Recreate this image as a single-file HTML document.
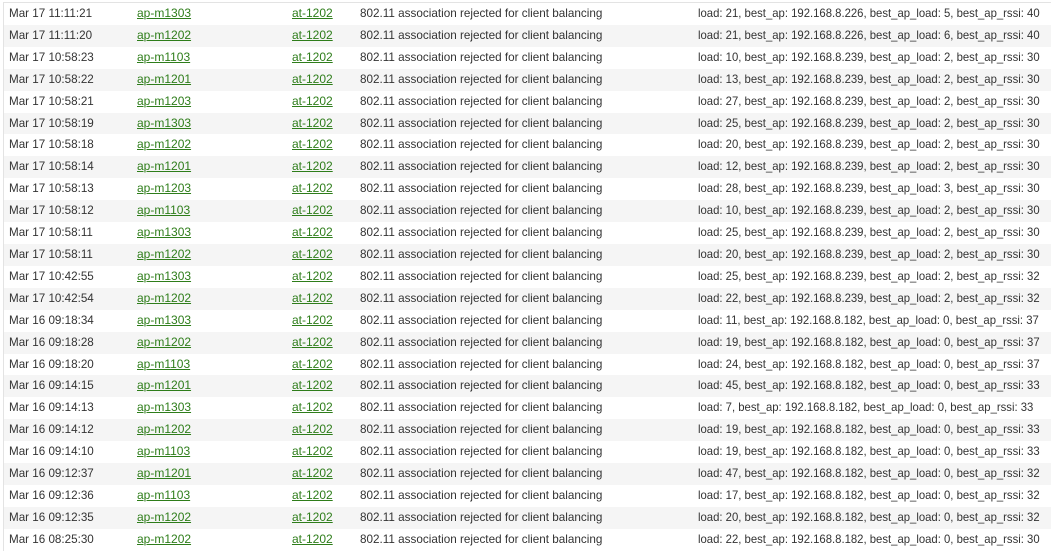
<!DOCTYPE html>
<html><head><meta charset="utf-8"><style>
body{margin:0;background:#fff;font-family:"Liberation Sans",sans-serif;font-size:12px;color:#333;width:1051px;height:555px;overflow:hidden}
.wrap{position:absolute;left:3px;top:2px;right:0;border-top:1px solid #e3e3e3;border-left:1px solid #e3e3e3}
.r{position:relative;height:21.92px;line-height:21.92px;white-space:nowrap}
.r:nth-child(even){background:#f5f5f5}
.r span{position:absolute;top:0;transform-origin:0 50%}
.a{left:5px;transform:scaleX(0.97)}.b{left:133px}.c{left:288px}.d{left:356px;transform:scaleX(0.975)}.e{left:694px;transform:scaleX(0.943)}
.b,.c{color:#2e7d1a;text-decoration:underline}
</style></head><body><div class="wrap">
<div class="r"><span class="a">Mar 17 11:11:21</span><span class="b">ap-m1303</span><span class="c">at-1202</span><span class="d">802.11 association rejected for client balancing</span><span class="e">load: 21, best_ap: 192.168.8.226, best_ap_load: 5, best_ap_rssi: 40</span></div>
<div class="r"><span class="a">Mar 17 11:11:20</span><span class="b">ap-m1202</span><span class="c">at-1202</span><span class="d">802.11 association rejected for client balancing</span><span class="e">load: 21, best_ap: 192.168.8.226, best_ap_load: 6, best_ap_rssi: 40</span></div>
<div class="r"><span class="a">Mar 17 10:58:23</span><span class="b">ap-m1103</span><span class="c">at-1202</span><span class="d">802.11 association rejected for client balancing</span><span class="e">load: 10, best_ap: 192.168.8.239, best_ap_load: 2, best_ap_rssi: 30</span></div>
<div class="r"><span class="a">Mar 17 10:58:22</span><span class="b">ap-m1201</span><span class="c">at-1202</span><span class="d">802.11 association rejected for client balancing</span><span class="e">load: 13, best_ap: 192.168.8.239, best_ap_load: 2, best_ap_rssi: 30</span></div>
<div class="r"><span class="a">Mar 17 10:58:21</span><span class="b">ap-m1203</span><span class="c">at-1202</span><span class="d">802.11 association rejected for client balancing</span><span class="e">load: 27, best_ap: 192.168.8.239, best_ap_load: 2, best_ap_rssi: 30</span></div>
<div class="r"><span class="a">Mar 17 10:58:19</span><span class="b">ap-m1303</span><span class="c">at-1202</span><span class="d">802.11 association rejected for client balancing</span><span class="e">load: 25, best_ap: 192.168.8.239, best_ap_load: 2, best_ap_rssi: 30</span></div>
<div class="r"><span class="a">Mar 17 10:58:18</span><span class="b">ap-m1202</span><span class="c">at-1202</span><span class="d">802.11 association rejected for client balancing</span><span class="e">load: 20, best_ap: 192.168.8.239, best_ap_load: 2, best_ap_rssi: 30</span></div>
<div class="r"><span class="a">Mar 17 10:58:14</span><span class="b">ap-m1201</span><span class="c">at-1202</span><span class="d">802.11 association rejected for client balancing</span><span class="e">load: 12, best_ap: 192.168.8.239, best_ap_load: 2, best_ap_rssi: 30</span></div>
<div class="r"><span class="a">Mar 17 10:58:13</span><span class="b">ap-m1203</span><span class="c">at-1202</span><span class="d">802.11 association rejected for client balancing</span><span class="e">load: 28, best_ap: 192.168.8.239, best_ap_load: 3, best_ap_rssi: 30</span></div>
<div class="r"><span class="a">Mar 17 10:58:12</span><span class="b">ap-m1103</span><span class="c">at-1202</span><span class="d">802.11 association rejected for client balancing</span><span class="e">load: 10, best_ap: 192.168.8.239, best_ap_load: 2, best_ap_rssi: 30</span></div>
<div class="r"><span class="a">Mar 17 10:58:11</span><span class="b">ap-m1303</span><span class="c">at-1202</span><span class="d">802.11 association rejected for client balancing</span><span class="e">load: 25, best_ap: 192.168.8.239, best_ap_load: 2, best_ap_rssi: 30</span></div>
<div class="r"><span class="a">Mar 17 10:58:11</span><span class="b">ap-m1202</span><span class="c">at-1202</span><span class="d">802.11 association rejected for client balancing</span><span class="e">load: 20, best_ap: 192.168.8.239, best_ap_load: 2, best_ap_rssi: 30</span></div>
<div class="r"><span class="a">Mar 17 10:42:55</span><span class="b">ap-m1303</span><span class="c">at-1202</span><span class="d">802.11 association rejected for client balancing</span><span class="e">load: 25, best_ap: 192.168.8.239, best_ap_load: 2, best_ap_rssi: 32</span></div>
<div class="r"><span class="a">Mar 17 10:42:54</span><span class="b">ap-m1202</span><span class="c">at-1202</span><span class="d">802.11 association rejected for client balancing</span><span class="e">load: 22, best_ap: 192.168.8.239, best_ap_load: 2, best_ap_rssi: 32</span></div>
<div class="r"><span class="a">Mar 16 09:18:34</span><span class="b">ap-m1303</span><span class="c">at-1202</span><span class="d">802.11 association rejected for client balancing</span><span class="e">load: 11, best_ap: 192.168.8.182, best_ap_load: 0, best_ap_rssi: 37</span></div>
<div class="r"><span class="a">Mar 16 09:18:28</span><span class="b">ap-m1202</span><span class="c">at-1202</span><span class="d">802.11 association rejected for client balancing</span><span class="e">load: 19, best_ap: 192.168.8.182, best_ap_load: 0, best_ap_rssi: 37</span></div>
<div class="r"><span class="a">Mar 16 09:18:20</span><span class="b">ap-m1103</span><span class="c">at-1202</span><span class="d">802.11 association rejected for client balancing</span><span class="e">load: 24, best_ap: 192.168.8.182, best_ap_load: 0, best_ap_rssi: 37</span></div>
<div class="r"><span class="a">Mar 16 09:14:15</span><span class="b">ap-m1201</span><span class="c">at-1202</span><span class="d">802.11 association rejected for client balancing</span><span class="e">load: 45, best_ap: 192.168.8.182, best_ap_load: 0, best_ap_rssi: 33</span></div>
<div class="r"><span class="a">Mar 16 09:14:13</span><span class="b">ap-m1303</span><span class="c">at-1202</span><span class="d">802.11 association rejected for client balancing</span><span class="e">load: 7, best_ap: 192.168.8.182, best_ap_load: 0, best_ap_rssi: 33</span></div>
<div class="r"><span class="a">Mar 16 09:14:12</span><span class="b">ap-m1202</span><span class="c">at-1202</span><span class="d">802.11 association rejected for client balancing</span><span class="e">load: 19, best_ap: 192.168.8.182, best_ap_load: 0, best_ap_rssi: 33</span></div>
<div class="r"><span class="a">Mar 16 09:14:10</span><span class="b">ap-m1103</span><span class="c">at-1202</span><span class="d">802.11 association rejected for client balancing</span><span class="e">load: 19, best_ap: 192.168.8.182, best_ap_load: 0, best_ap_rssi: 33</span></div>
<div class="r"><span class="a">Mar 16 09:12:37</span><span class="b">ap-m1201</span><span class="c">at-1202</span><span class="d">802.11 association rejected for client balancing</span><span class="e">load: 47, best_ap: 192.168.8.182, best_ap_load: 0, best_ap_rssi: 32</span></div>
<div class="r"><span class="a">Mar 16 09:12:36</span><span class="b">ap-m1103</span><span class="c">at-1202</span><span class="d">802.11 association rejected for client balancing</span><span class="e">load: 17, best_ap: 192.168.8.182, best_ap_load: 0, best_ap_rssi: 32</span></div>
<div class="r"><span class="a">Mar 16 09:12:35</span><span class="b">ap-m1202</span><span class="c">at-1202</span><span class="d">802.11 association rejected for client balancing</span><span class="e">load: 20, best_ap: 192.168.8.182, best_ap_load: 0, best_ap_rssi: 32</span></div>
<div class="r"><span class="a">Mar 16 08:25:30</span><span class="b">ap-m1202</span><span class="c">at-1202</span><span class="d">802.11 association rejected for client balancing</span><span class="e">load: 22, best_ap: 192.168.8.182, best_ap_load: 0, best_ap_rssi: 30</span></div>
</div></body></html>
